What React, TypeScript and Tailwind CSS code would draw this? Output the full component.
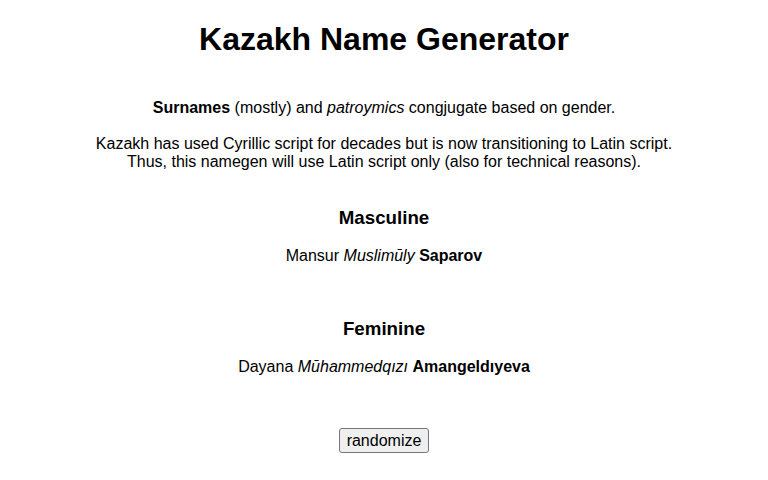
import { useState } from 'react'

type Name = { given: string; patronymic: string; surname: string }

const initial: { masculine: Name; feminine: Name } = {
  masculine: { given: 'Mansur', patronymic: 'Muslimūly', surname: 'Saparov' },
  feminine: { given: 'Dayana', patronymic: 'Mūhammedqızı', surname: 'Amangeldıyeva' },
}

function FullName({ name }: { name: Name }) {
  return (
    <p className="text-[16px] leading-[18px]">
      {name.given} <em>{name.patronymic}</em> <strong>{name.surname}</strong>
    </p>
  )
}

export default function App() {
  const [names] = useState(initial)

  return (
    <div
      className="min-h-[480px] bg-white text-black text-center"
      style={{ fontFamily: '"Liberation Sans", Arial, sans-serif' }}
    >
      <h1 className="pt-[21px] text-[32px] leading-[37px] font-bold">Kazakh Name Generator</h1>

      <p className="mt-[41px] text-[16px] leading-[18px]">
        <strong>Surnames</strong> (mostly) and <em>patroymics</em> congjugate based on gender.
      </p>
      <p className="mt-[18px] text-[16px] leading-[18px]">
        Kazakh has used Cyrillic script for decades but is now transitioning to Latin script.
        <br />
        Thus, this namegen will use Latin script only (also for technical reasons).
      </p>

      <h3 className="mt-[36px] text-[18.72px] leading-[22px] font-bold">Masculine</h3>
      <div className="mt-[18px]">
        <FullName name={names.masculine} />
      </div>

      <h3 className="mt-[53px] text-[18.72px] leading-[22px] font-bold">Feminine</h3>
      <div className="mt-[18px]">
        <FullName name={names.feminine} />
      </div>

      <div className="mt-[52px]">
        <button className="px-[7px] py-[2px] text-[16px] leading-[19px] bg-[#efefef] border border-[#767676] rounded-[3px] text-black">
          randomize
        </button>
      </div>
    </div>
  )
}
